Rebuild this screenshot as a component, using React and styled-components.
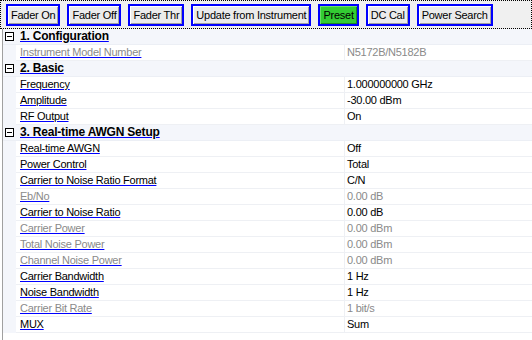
import React from "react";
import styled, { createGlobalStyle } from "styled-components";

const GlobalStyle = createGlobalStyle`
  html, body {
    margin: 0;
    padding: 0;
    background: #ffffff;
    font-family: "Liberation Sans", Arial, sans-serif;
    font-size: 11px;
    color: #000;
  }
`;

const buttons = [
  { label: "Fader On" },
  { label: "Fader Off" },
  { label: "Fader Thr" },
  { label: "Update from Instrument" },
  { label: "Preset", active: true },
  { label: "DC Cal" },
  { label: "Power Search" },
];

// disabled rows are drawn in grey
const sections = [
  {
    title: "1. Configuration",
    rows: [["Instrument Model Number", "N5172B/N5182B", true]],
  },
  {
    title: "2. Basic",
    rows: [
      ["Frequency", "1.000000000 GHz"],
      ["Amplitude", "-30.00 dBm"],
      ["RF Output", "On"],
    ],
  },
  {
    title: "3. Real-time AWGN Setup",
    rows: [
      ["Real-time AWGN", "Off"],
      ["Power Control", "Total"],
      ["Carrier to Noise Ratio Format", "C/N"],
      ["Eb/No", "0.00 dB", true],
      ["Carrier to Noise Ratio", "0.00 dB"],
      ["Carrier Power", "0.00 dBm", true],
      ["Total Noise Power", "0.00 dBm", true],
      ["Channel Noise Power", "0.00 dBm", true],
      ["Carrier Bandwidth", "1 Hz"],
      ["Noise Bandwidth", "1 Hz"],
      ["Carrier Bit Rate", "1 bit/s", true],
      ["MUX", "Sum"],
    ],
  },
];

export default function App() {
  return (
    <>
      <GlobalStyle />
      <Toolbar>
        {buttons.map((b) => (
          <ToolButton key={b.label} $active={b.active}>
            {b.label}
          </ToolButton>
        ))}
      </Toolbar>
      <Grid>
        {sections.map((s) => (
          <React.Fragment key={s.title}>
            <HeaderRow>
              <Gutter>
                <Collapse />
              </Gutter>
              <HeaderText>{s.title}</HeaderText>
            </HeaderRow>
            {s.rows.map(([name, value, disabled]) => (
              <Row key={name}>
                <Gutter />
                <LabelCell>
                  <Label $disabled={disabled}>{name}</Label>
                </LabelCell>
                <ValueCell $disabled={disabled}>{value}</ValueCell>
              </Row>
            ))}
          </React.Fragment>
        ))}
      </Grid>
    </>
  );
}

const Toolbar = styled.div`
  display: flex;
  align-items: center;
  gap: 7px;
  height: 29px;
  box-sizing: border-box;
  padding: 0 5px;
  background: #f0f0f0;
  border: 1px dotted #000;
`;

const ToolButton = styled.div`
  height: 22px;
  box-sizing: border-box;
  padding: 0 3px;
  display: flex;
  align-items: center;
  letter-spacing: -0.25px;
  white-space: nowrap;
  background: ${(p) => (p.$active ? "#33cc33" : "#ebebeb")};
  border: 2px solid #0000ff;
  box-shadow: ${(p) =>
    p.$active
      ? "inset 1px 1px #66e066, inset -1px -1px #1f8a1f"
      : "inset 1px 1px #ffffff, inset -1px -1px #a0a0a0"};
`;

const Grid = styled.div`
  margin-left: 2px;
  border-left: 1px solid #a0a0a0;
  min-height: calc(100vh - 29px);
`;

const Row = styled.div`
  display: flex;
  height: 16px;
`;

const HeaderRow = styled(Row)`
  background: #f4f6fb;
  border-bottom: 1px solid #eceff5;
  box-sizing: border-box;
`;

const Gutter = styled.div`
  width: 13px;
  flex: none;
  background: #f4f6fb;
  display: flex;
  align-items: center;
  justify-content: center;
`;

const Collapse = styled.div`
  position: relative;
  width: 9px;
  height: 9px;
  box-sizing: border-box;
  border: 1px solid #000;
  background: #fff;
  &::after {
    content: "";
    position: absolute;
    left: 1px;
    right: 1px;
    top: 3px;
    height: 1px;
    background: #000;
  }
`;

const HeaderText = styled.div`
  padding-left: 4px;
  font-weight: bold;
  font-size: 12px;
  letter-spacing: -0.2px;
  line-height: 15px;
  text-decoration: underline;
  text-decoration-color: #0000ff;
  text-underline-offset: 1px;
`;

const LabelCell = styled.div`
  width: 328px;
  flex: none;
  box-sizing: border-box;
  padding-left: 4px;
  line-height: 15px;
  border-bottom: 1px solid #eef0f4;
`;

const Label = styled.span`
  letter-spacing: -0.25px;
  color: ${(p) => (p.$disabled ? "#8a8a8a" : "#000")};
  text-decoration: underline;
  text-decoration-color: #0000ff;
  text-underline-offset: 1px;
`;

const ValueCell = styled.div`
  flex: 1;
  box-sizing: border-box;
  padding-left: 2px;
  line-height: 15px;
  letter-spacing: -0.25px;
  border-left: 1px solid #eef0f4;
  border-bottom: 1px solid #eef0f4;
  color: ${(p) => (p.$disabled ? "#8a8a8a" : "#000")};
`;
